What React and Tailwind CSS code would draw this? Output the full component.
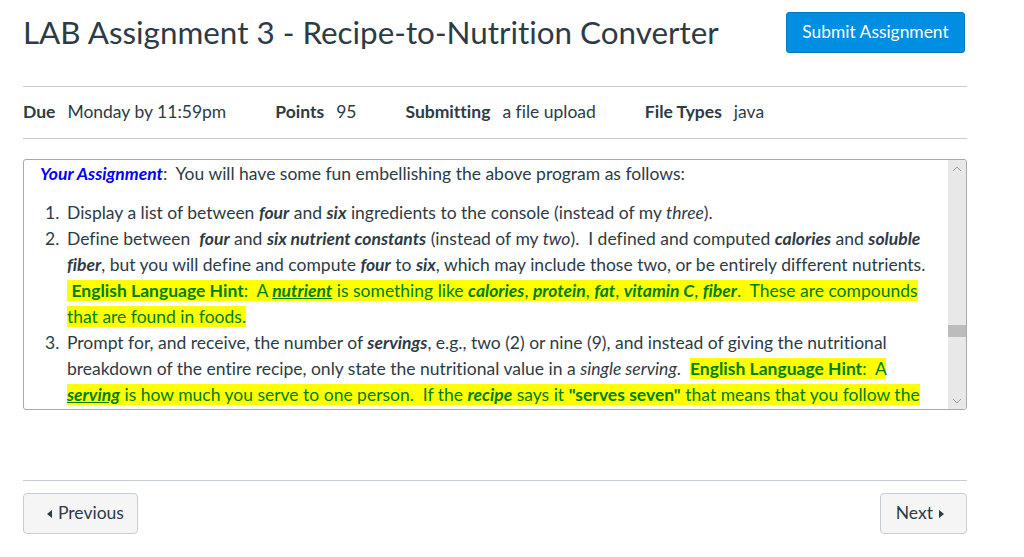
import React from "react";

function BI({ children }) {
	return <b className="font-bold italic">{children}</b>;
}

function Hint({ children }) {
	return <span className="bg-[#ffff00] text-[#008000]">{children}</span>;
}

function Chevron({ down }) {
	return (
		<svg width="10" height="6" viewBox="0 0 10 6" className="block">
			<path
				d={down ? "M1 1 L5 5 L9 1" : "M1 5 L5 1 L9 5"}
				fill="none"
				stroke="#9a9a9a"
				strokeWidth="1"
			/>
		</svg>
	);
}

function Caret({ left }) {
	return (
		<svg width="5" height="8" viewBox="0 0 5 8" className="block">
			<path d={left ? "M5 0 L0 4 L5 8 Z" : "M0 0 L5 4 L0 8 Z"} fill="#2d3b45" />
		</svg>
	);
}

function Detail({ label, value }) {
	return (
		<div className="flex items-center gap-[12px]">
			<span className="font-bold">{label}</span>
			<span>{value}</span>
		</div>
	);
}

export default function App() {
	return (
		<div className="min-h-[557px] bg-white pl-[23px] pr-[57px] text-[#2d3b45] font-['Lato',sans-serif] [font-variant-ligatures:none]">
			<div className="flex items-center justify-between pt-[12px]">
				<h1 className="text-[31.4px] leading-[41px] font-normal">
					LAB Assignment 3 - Recipe-to-Nutrition Converter
				</h1>
				<button className="mr-[2px] h-[41px] w-[179px] rounded-[3px] border border-[#0079c1] bg-[#008ee2] text-[17.4px] text-white">
					Submit Assignment
				</button>
			</div>

			<div className="mt-[33px] border-t border-b border-[#c7cdd1]">
				<div className="flex h-[51px] items-center gap-[49px] text-[17.5px]">
					<Detail label="Due" value="Monday by 11:59pm" />
					<Detail label="Points" value="95" />
					<Detail label="Submitting" value="a file upload" />
					<Detail label="File Types" value="java" />
				</div>
			</div>

			<div className="mt-[20px] flex h-[251px] overflow-hidden rounded-[3px] border border-[#a9a9a9]">
				<div className="flex-1 overflow-hidden pt-[1px] pl-[16px] pr-[10px] text-[17.5px] leading-[26px]">
					<p>
						<span className="font-bold italic text-[#0000ff]">Your Assignment</span>:&nbsp; You
						will have some fun embellishing the above program as follows:
					</p>
					<ol className="mt-[13px]">
						<li className="flex">
							<span className="w-[27px] shrink-0 pl-[5px]">1.</span>
							<span>
								Display a list of between <BI>four</BI> and <BI>six</BI> ingredients to the
								console (instead of my <i>three</i>).
							</span>
						</li>
						<li className="flex">
							<span className="w-[27px] shrink-0 pl-[5px]">2.</span>
							<span>
								Define between&nbsp; <BI>four</BI> and <BI>six nutrient constants</BI> (instead
								of my <i>two</i>).&nbsp; I defined and computed <BI>calories</BI> and{" "}
								<BI>soluble fiber</BI>, but you will define and compute <BI>four</BI> to{" "}
								<BI>six</BI>, which may include those two, or be entirely different nutrients.{" "}
								<Hint>
									&nbsp;<b>English Language Hint</b>:&nbsp; A{" "}
									<u className="font-bold italic">nutrient</u> is something like{" "}
									<BI>calories</BI>, <BI>protein</BI>, <BI>fat</BI>, <BI>vitamin C</BI>,{" "}
									<BI>fiber</BI>.&nbsp; These are compounds that are found in foods.
								</Hint>
							</span>
						</li>
						<li className="flex">
							<span className="w-[27px] shrink-0 pl-[5px]">3.</span>
							<span>
								Prompt for, and receive, the number of <BI>servings</BI>, e.g., two (2) or nine
								(9), and instead of giving the nutritional breakdown of the entire recipe, only
								state the nutritional value in a <i>single serving</i>.&nbsp;{" "}
								<Hint>
									<b>English Language Hint</b>:&nbsp; A{" "}
									<u className="font-bold italic">serving</u> is how much you serve to one
									person.&nbsp; If the <BI>recipe</BI> says it <b>"serves seven"</b> that
									means that you follow the recipe and it makes enough food for seven people.
								</Hint>
							</span>
						</li>
						<li className="flex">
							<span className="w-[27px] shrink-0 pl-[5px]">4.</span>
							<span>
								Display the nutritional values of a single serving to the console.
							</span>
						</li>
					</ol>
				</div>
				<div className="flex w-[18px] shrink-0 flex-col bg-[#e8e8e8]">
					<div className="flex h-[17px] items-center justify-center">
						<Chevron />
					</div>
					<div className="h-[148px]" />
					<div className="h-[12px] bg-[#bcbcbc]" />
					<div className="flex-1" />
					<div className="flex h-[17px] items-center justify-center">
						<Chevron down />
					</div>
				</div>
			</div>

			<div className="mt-[70px] border-t border-[#c7cdd1] pt-[12px]">
				<div className="flex justify-between">
					<button className="flex h-[41px] items-center gap-[6px] rounded-[4px] border border-[#c7cdd1] bg-[#f5f5f5] pl-[23px] pr-[13px] text-[17.5px] text-[#2d3b45]">
						<Caret left />
						Previous
					</button>
					<button className="flex h-[41px] items-center gap-[6px] rounded-[4px] border border-[#c7cdd1] bg-[#f5f5f5] pl-[15px] pr-[22px] text-[17.5px] text-[#2d3b45]">
						Next
						<Caret />
					</button>
				</div>
			</div>
		</div>
	);
}
